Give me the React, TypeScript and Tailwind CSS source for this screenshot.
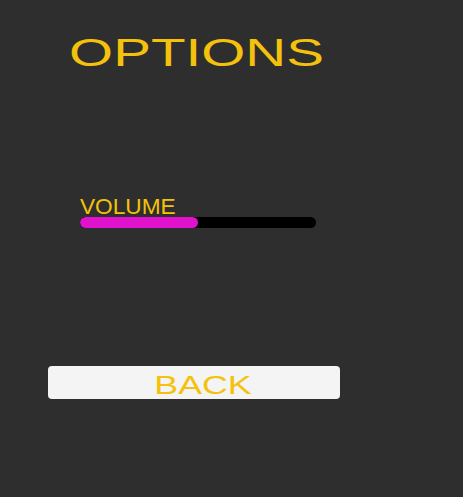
export default function App() {
  const volume = 0.5;

  return (
    <div className="w-[463px] h-[497px] bg-[#2e2e2e] font-['Liberation_Sans',Arial,sans-serif] overflow-hidden">
      <div className="ml-[48px] w-[292px] flex flex-col">
        {/* title */}
        <div className="mt-[34px] flex justify-center">
          <h1 className="text-[38px] leading-none text-[#f4c20d] scale-x-[1.49] translate-x-[3px]">OPTIONS</h1>
        </div>

        {/* volume slider */}
        <div className="mt-[124px] ml-[32px] w-[236px] flex flex-col">
          <span className="text-[22px] leading-none text-[#f4c20d] scale-x-[1.03] origin-left">VOLUME</span>
          <div className="mt-[-1px] h-[11px] rounded-full bg-black overflow-hidden">
            <div className="h-full rounded-full bg-[#e012cc]" style={{ width: `${volume * 100}%` }} />
          </div>
        </div>

        {/* back button */}
        <button className="mt-[138px] h-[33px] w-[292px] rounded-[4px] bg-[#f4f4f4] flex justify-center pt-[7px]">
          <span className="text-[25px] leading-none text-[#f4c20d] scale-x-[1.43] translate-x-[9px]">BACK</span>
        </button>
      </div>
    </div>
  );
}
